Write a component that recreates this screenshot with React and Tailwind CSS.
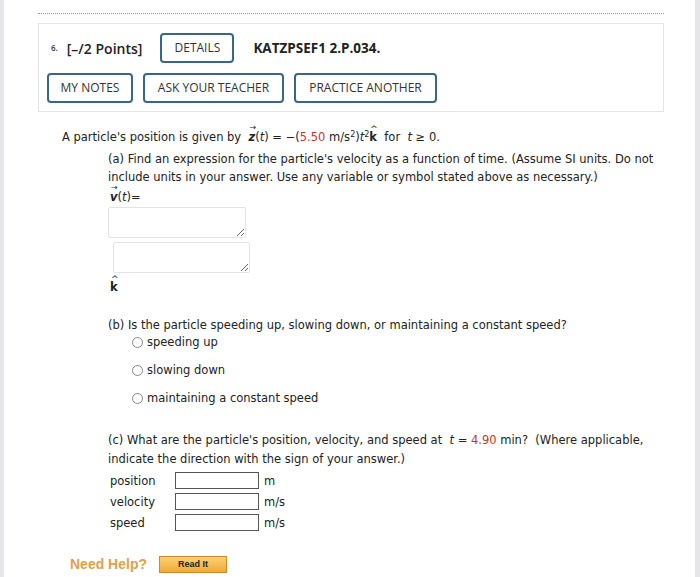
import React from "react";

const V = "font-['DejaVu_Sans',Verdana,sans-serif]";

function Vec({ ch }) {
  return (
    <span className="relative inline-block font-bold italic">
      <span className="absolute left-[1px] top-[-9px] text-[8px] not-italic font-normal">→</span>
      {ch}
    </span>
  );
}

function Hat({ ch }) {
  return (
    <span className="relative inline-block font-bold">
      <span className="absolute left-[1px] top-[-8px] text-[9px] font-normal">^</span>
      {ch}
    </span>
  );
}

function Btn({ w, children }) {
  return (
    <div
      className={`${w} h-[30px] shrink-0 border-2 border-[#3a6686] rounded-[4px] flex items-center justify-center text-[12px] text-[#333] font-['Open_Sans',sans-serif]`}
    >
      {children}
    </div>
  );
}

function Radio({ label }) {
  return (
    <div className="flex items-center h-[28px]">
      <span className="w-[11px] h-[11px] rounded-full border border-[#888] bg-white ml-[24px]" />
      <span className="ml-[4px]">{label}</span>
    </div>
  );
}

function Row({ label, unit }) {
  return (
    <div className="flex items-center h-[21px]">
      <span className="w-[67px] pl-[2px]">{label}</span>
      <span className="w-[84px] h-[17px] border border-[#555] bg-white" />
      <span className="ml-[5px]">{unit}</span>
    </div>
  );
}

export default function App() {
  return (
    <div className="w-[700px] h-[577px] bg-white flex overflow-hidden">
      <div className="w-[4px] shrink-0 bg-[#e6e6ea]" />
      <div className="flex-1 pl-[34px]">
        <div className="pt-[13px]">
          <div className="w-[626px] border-t border-dotted border-[#9a9a9a]" />
        </div>
        <div className="mt-[9px] w-[626px] h-[89px] border border-[#e4e4e4] flex flex-col font-['Open_Sans',sans-serif]">
          <div className="flex items-center mt-[9px] h-[30px]">
            <span className="ml-[12px] text-[8px] font-semibold text-[#333]">6.</span>
            <span className="ml-[9px] text-[14px] font-semibold text-[#222]">[–/2 Points]</span>
            <div className="ml-[18px]">
              <Btn w="w-[74px]">DETAILS</Btn>
            </div>
            <span className="ml-[19px] text-[13.5px] font-bold text-[#222]">KATZPSEF1 2.P.034.</span>
          </div>
          <div className="flex items-center mt-[10px] ml-[8px] gap-[10px]">
            <Btn w="w-[86px]">MY NOTES</Btn>
            <Btn w="w-[141px]">ASK YOUR TEACHER</Btn>
            <Btn w="w-[143px]">PRACTICE ANOTHER</Btn>
          </div>
        </div>

        <div className={`${V} text-[11.5px] text-[#222] leading-[18px]`}>
          <div className="mt-[16px] ml-[24px]">
            A particle's position is given by{"\u00a0 "}
            <Vec ch="z" />
            (<i>t</i>) = −(<span className="text-[#c0392b]">5.50</span> m/s<sup className="text-[8px]">2</sup>)
            <i>t</i>
            <sup className="text-[8px]">2</sup>
            <Hat ch="k" />
            {"\u00a0 "}for{"\u00a0 "}<i>t</i> ≥ 0.
          </div>
          <div className="ml-[70px] mt-[4px] w-[560px]">
            (a) Find an expression for the particle's velocity as a function of time. (Assume SI units. Do not include units in your answer. Use any variable or symbol stated above as necessary.)
          </div>
          <div className="ml-[72px] mt-[2px]">
            <Vec ch="v" />
            (<i>t</i>)=
          </div>
          <textarea
            readOnly
            className="block ml-[70px] mt-[1px] w-[138px] h-[31px] border border-[#e3e3e3] rounded-[2px] bg-white resize"
          />
          <textarea
            readOnly
            className="block ml-[75px] mt-[4px] w-[137px] h-[31px] border border-[#e3e3e3] rounded-[2px] bg-white resize"
          />
          <div className="ml-[72px] mt-[5px]">
            <Hat ch="k" />
          </div>

          <div className="ml-[70px] mt-[20px]">
            (b) Is the particle speeding up, slowing down, or maintaining a constant speed?
          </div>
          <div className="ml-[70px] mt-[-6px]">
            <Radio label="speeding up" />
            <Radio label="slowing down" />
            <Radio label="maintaining a constant speed" />
          </div>

          <div className="ml-[70px] mt-[19px] w-[556px] leading-[19px]">
            (c) What are the particle's position, velocity, and speed at{"\u00a0 "}<i>t</i> = <span className="text-[#c0392b]">4.90</span> min?{"\u00a0 "}(Where applicable, indicate the direction with the sign of your answer.)
          </div>
          <div className="ml-[70px] mt-[1px]">
            <Row label="position" unit="m" />
            <Row label="velocity" unit="m/s" />
            <Row label="speed" unit="m/s" />
          </div>
        </div>

        <div className="flex items-center ml-[32px] mt-[21px]">
          <span className="font-['Liberation_Sans',Arial,sans-serif] font-bold text-[14px] text-[#e0a04a]">Need Help?</span>
          <span className="ml-[12px] w-[68px] h-[17px] border border-[#c98a2a] bg-gradient-to-b from-[#fcd16f] to-[#f0a93a] flex items-center justify-center font-['Liberation_Sans',Arial,sans-serif] font-bold text-[9px] text-[#222]">
            Read It
          </span>
        </div>
      </div>
      <div className="w-[5px] shrink-0 bg-[#e6e6ea]" />
    </div>
  );
}
